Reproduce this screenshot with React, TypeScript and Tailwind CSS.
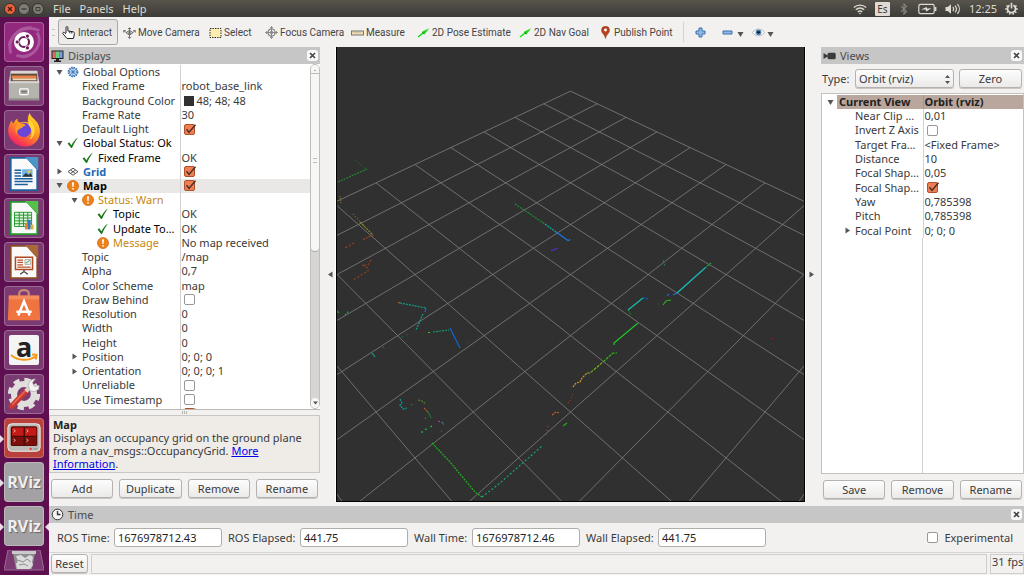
import type { ReactNode } from "react";

const FONT = "font-['Noto_Sans','Open_Sans',sans-serif]";

type IconName = "cog" | "ok" | "warn" | "grid";

type Prop = {
  name: string;
  level: number;
  arrow?: "open" | "closed";
  icon?: IconName;
  value?: string;
  checked?: boolean;
  swatch?: boolean;
  tone?: string;
  selected?: boolean;
};

const DISPLAYS: Prop[] = [
  { name: "Global Options", level: 0, arrow: "open", icon: "cog" },
  { name: "Fixed Frame", level: 1, value: "robot_base_link" },
  { name: "Background Color", level: 1, value: "48; 48; 48", swatch: true },
  { name: "Frame Rate", level: 1, value: "30" },
  { name: "Default Light", level: 1, checked: true },
  { name: "Global Status: Ok", level: 0, arrow: "open", icon: "ok", tone: "text-black" },
  { name: "Fixed Frame", level: 1, icon: "ok", value: "OK", tone: "text-black" },
  { name: "Grid", level: 0, arrow: "closed", icon: "grid", checked: true, tone: "font-bold text-[#1c6ab8]" },
  { name: "Map", level: 0, arrow: "open", icon: "warn", checked: true, tone: "font-bold text-black", selected: true },
  { name: "Status: Warn", level: 1, arrow: "open", icon: "warn", tone: "text-[#c8860e]" },
  { name: "Topic", level: 2, icon: "ok", value: "OK", tone: "text-black" },
  { name: "Update To…", level: 2, icon: "ok", value: "OK", tone: "text-black" },
  { name: "Message", level: 2, icon: "warn", value: "No map received", tone: "text-[#c8860e]" },
  { name: "Topic", level: 1, value: "/map" },
  { name: "Alpha", level: 1, value: "0,7" },
  { name: "Color Scheme", level: 1, value: "map" },
  { name: "Draw Behind", level: 1, checked: false },
  { name: "Resolution", level: 1, value: "0" },
  { name: "Width", level: 1, value: "0" },
  { name: "Height", level: 1, value: "0" },
  { name: "Position", level: 1, arrow: "closed", value: "0; 0; 0" },
  { name: "Orientation", level: 1, arrow: "closed", value: "0; 0; 0; 1" },
  { name: "Unreliable", level: 1, checked: false },
  { name: "Use Timestamp", level: 1, checked: false },
  { name: "", level: 1, checked: true },
];

const VIEW: Prop[] = [
  { name: "Near Clip …", level: 1, value: "0,01" },
  { name: "Invert Z Axis", level: 1, checked: false },
  { name: "Target Fra…", level: 1, value: "<Fixed Frame>" },
  { name: "Distance", level: 1, value: "10" },
  { name: "Focal Shap…", level: 1, value: "0,05" },
  { name: "Focal Shap…", level: 1, checked: true },
  { name: "Yaw", level: 1, value: "0,785398" },
  { name: "Pitch", level: 1, value: "0,785398" },
  { name: "Focal Point", level: 1, arrow: "closed", value: "0; 0; 0" },
];

function Arrow({ dir }: { dir: "open" | "closed" | "left" }) {
  const d = { open: "M0.5 1h6L3.5 6z", closed: "M1.5 0.5v6L6 3.5z", left: "M5.5 0.5v6L1 3.5z" }[dir];
  return (
    <svg width="7" height="7" viewBox="0 0 7 7" fill="#555" className="shrink-0" aria-hidden>
      <path d={d} />
    </svg>
  );
}

function RowIcon({ name }: { name: IconName }) {
  if (name === "ok")
    return (
      <svg width="12" height="12" viewBox="0 0 12 12" fill="#1a7a1a" aria-hidden>
        <path d="M0.6 6.4 2.200 5.2 4.4 8.3C6 5 8 2.200 11 0.400 8.6 3.6 6.600 7 5 11H4.1z" />
      </svg>
    );
  if (name === "warn")
    return (
      <svg width="12" height="12" viewBox="0 0 12 12" aria-hidden>
        <circle cx="6" cy="6" r="5.5" fill="#f08019" stroke="#c9610c" strokeWidth="0.7" />
        <path d="M5 2.2h2L6.6 7H5.4z" fill="#fff" />
        <circle cx="6" cy="8.8" r="0.9" fill="#fff" />
      </svg>
    );
  if (name === "grid")
    return (
      <svg width="12" height="12" viewBox="0 0 12 12" fill="none" stroke="#444" strokeWidth="0.9" aria-hidden>
        <path d="M6 2.2 11 5.7 6 9.2 1 5.7zM3.5 4 8.5 7.5M8.5 4 3.5 7.5" />
      </svg>
    );
  return (
    <svg width="12" height="12" viewBox="0 0 12 12" fill="none" stroke="#3a76b8" aria-hidden>
      <circle cx="6" cy="6" r="4.6" strokeWidth="1.6" strokeDasharray="1.6 0.8" />
      <circle cx="6" cy="6" r="3.6" strokeWidth="0.8" />
      <circle cx="6" cy="6" r="1.2" strokeWidth="0.8" />
      <path d="M6 2.4v7.2M2.4 6h7.2M3.5 3.5l5 5M8.5 3.5l-5 5" strokeWidth="0.7" />
    </svg>
  );
}

function Check({ on, label, id }: { on?: boolean; label?: string; id?: string }) {
  return (
    <span className="relative block h-[11px] w-[11px] shrink-0">
      <input
        id={id}
        type="checkbox"
        defaultChecked={on}
        aria-label={label}
        className="peer block h-[11px] w-[11px] appearance-none rounded-[2px] border border-[#9a9895] bg-white checked:border-[#b0512c] checked:bg-[#ee7f55]"
      />
      <svg viewBox="0 0 13 12" width="13" height="12" fill="none" stroke="#4a3028" strokeWidth="1.5" className="pointer-events-none absolute top-0 left-0 hidden peer-checked:block" aria-hidden>
        <path d="M2.5 5.2 5 8.4 11.5 0.8" />
      </svg>
    </span>
  );
}

function PropRow({ p }: { p: Prop }) {
  return (
    <tr className={p.selected ? "bg-[#e9e8e7]" : ""}>
      <td className="overflow-hidden border-r border-[#d4d2d0] p-0">
        <div className="flex h-[14px] items-center pl-[2px] whitespace-nowrap">
          {p.level > 0 && <span className="w-[15px] shrink-0" />}
          {p.level > 1 && <span className="w-[15px] shrink-0" />}
          <span className="flex w-4 shrink-0 justify-center">{p.arrow && <Arrow dir={p.arrow} />}</span>
          {p.icon && <span className="w-4 shrink-0"><RowIcon name={p.icon} /></span>}
          <span className={p.tone}>{p.name}</span>
        </div>
      </td>
      <td className="p-0">
        <div className="flex h-[14px] items-center pl-px whitespace-nowrap">
          {p.checked !== undefined && <span className="pl-[2px]"><Check on={p.checked} label={p.name || "Enabled"} /></span>}
          {p.swatch && <span className="mr-[3px] ml-[2px] h-[10px] w-[10px] bg-[#303030]" />}
          {p.value}
        </div>
      </td>
    </tr>
  );
}

function PushButton({ children, className = "" }: { children: ReactNode; className?: string }) {
  return (
    <button type="button" className={`h-[19px] rounded-[3px] border border-[#b4b1ae] bg-linear-to-b from-[#fdfdfd] to-[#ebeae9] text-center leading-4 whitespace-nowrap shadow-[0_1px_0_#c9c7c5] ${className}`}>
      {children}
    </button>
  );
}

function CloseButton() {
  return (
    <button type="button" aria-label="Close" className="mr-[2px] ml-auto flex h-[11px] w-[11px] items-center justify-center rounded-[3px] bg-[#f8f8f8]">
      <svg width="7" height="7" viewBox="0 0 7 7" stroke="#444" strokeWidth="1.6" aria-hidden><path d="M1 1l5 5M6 1 1 6" /></svg>
    </button>
  );
}

function DockHeader({ icon, title }: { icon: ReactNode; title: string }) {
  return (
    <header className="flex h-[17px] shrink-0 items-center gap-1 bg-[#c6c6c6] pl-[2px] text-[#4a4a4a]">
      {icon}
      <h2>{title}</h2>
      <CloseButton />
    </header>
  );
}

/* ---------- top bar ---------- */

function TopBar() {
  return (
    <header className="flex h-[17px] shrink-0 items-center bg-linear-to-b from-[#57544c] to-[#3c3b37] text-[#dfdbd2]">
      <div className="flex w-[49px] items-center gap-[2px] pl-1">
        <button type="button" aria-label="Close window" className="h-3 w-3">
          <svg viewBox="0 0 12 12" aria-hidden><circle cx="6" cy="6" r="5.5" fill="#e9623a" stroke="#33312c" /><path d="M4 4l4 4M8 4 4 8" stroke="#4a1c0e" strokeWidth="1.3" /></svg>
        </button>
        <button type="button" aria-label="Minimize window" className="h-3 w-3">
          <svg viewBox="0 0 12 12" aria-hidden><circle cx="6" cy="6" r="5.5" fill="#7f7c74" stroke="#33312c" /><path d="M3.5 6h5" stroke="#3a3833" strokeWidth="1.3" /></svg>
        </button>
        <button type="button" aria-label="Maximize window" className="h-3 w-3">
          <svg viewBox="0 0 12 12" fill="none" aria-hidden><circle cx="6" cy="6" r="5.5" fill="#7f7c74" stroke="#33312c" /><path d="M4 4.5h4v3.2H4z" stroke="#3a3833" /></svg>
        </button>
      </div>
      <nav className="flex gap-[9px] pl-1">
        <button type="button">File</button>
        <button type="button">Panels</button>
        <button type="button">Help</button>
      </nav>
      <div className="ml-auto flex items-center gap-2 pr-[6px]">
        <svg width="14" height="12" viewBox="0 0 14 12" fill="none" stroke="#dfdbd2" strokeWidth="1.3" aria-label="Wi-Fi">
          <path d="M0.8 4.6c3.6-3.2 8.8-3.2 12.4 0M2.8 6.8c2.5-2.2 5.9-2.2 8.4 0M4.8 8.9c1.4-1.2 3-1.2 4.4 0" />
          <path d="M5.8 10 7 11.4 8.2 10z" fill="#dfdbd2" stroke="none" />
        </svg>
        <span className="flex h-[14px] w-[15px] items-center justify-center rounded-[1px] bg-[#dfdbd2] text-[10px] text-[#3c3b37]">Es</span>
        <svg width="8" height="12" viewBox="0 0 8 12" fill="none" stroke="#8a877f" strokeWidth="1.1" className="mx-[2px]" aria-label="Bluetooth"><path d="M1 3.2 6.5 8.4 4 11V1l2.5 2.6L1 8.8" /></svg>
        <svg width="19" height="12" viewBox="0 0 19 12" fill="none" stroke="#dfdbd2" strokeWidth="1.2" aria-label="Battery">
          <rect x="0.8" y="1.4" width="15.4" height="9.2" rx="1.5" />
          <path d="M17.6 4v4" strokeWidth="1.6" />
          <path d="M3 6.5 8.5 4l.6 1.6 4.4-.4L8.2 8.4l-.6-1.8z" fill="#dfdbd2" stroke="none" />
        </svg>
        <svg width="16" height="12" viewBox="0 0 16 12" fill="none" stroke="#dfdbd2" strokeWidth="1.2" aria-label="Volume">
          <path d="M0.5 4h2.2L6 1.2v9.6L2.7 8H.5z" fill="#dfdbd2" stroke="none" />
          <path d="M7.8 4c1 1.2 1 2.8 0 4M10 2.6c1.8 2 1.8 4.8 0 6.8M12.4 1.2c2.6 2.8 2.6 6.8 0 9.6" />
        </svg>
        <time>12:25</time>
        <svg width="13" height="13" viewBox="0 0 13 13" fill="none" stroke="#dfdbd2" aria-label="Session">
          <path d="M4.6 3.2a4 4 0 1 0 3.8 0" strokeWidth="1.8" />
          <path d="M6.5 0.8v5.7" strokeWidth="1.6" />
          <path d="M1.4 3.600l1.600 0.900M0.200 7h1.800M1.600 10.600l1.500-1.100M4.400 12.600l0.700-1.600M8.600 12.600l-0.700-1.600M11.400 10.600l-1.500-1.100M12.800 7H11M11.600 3.600 10 4.500" strokeWidth="1.5" />
        </svg>
      </div>
    </header>
  );
}

/* ---------- launcher ---------- */

function OfficeDoc({ color, fold, children }: { color: string; fold: string; children: ReactNode }) {
  return (
    <svg viewBox="0 0 40 40" aria-hidden>
      <path d="M5 2h20l10 11v25H5z" fill={color} />
      <path d="M7 4h16l10 11v21H7z" fill="#fafafa" />
      <path d="M21 2h14v14z" fill={fold} />
      {children}
    </svg>
  );
}

function UbuntuLogo() {
  return (
    <svg viewBox="0 0 40 40" fill="none" aria-hidden>
      <path d="M4 24C8 8 24 2 36 8M6 32C2 16 14 4 28 5M34 10c6 12-2 24-16 26M12 34c10 4 22-2 24-14" stroke="#fff" strokeOpacity="0.22" strokeWidth="3" />
      <circle cx="20" cy="20" r="10.5" fill="#fff" />
      <circle cx="20" cy="20" r="5.3" stroke="#6b1a5c" strokeWidth="2.2" />
      <g fill="#6b1a5c" stroke="#fff" strokeWidth="0.9">
        <circle cx="12.8" cy="20" r="2.2" />
        <circle cx="23.6" cy="13.8" r="2.2" />
        <circle cx="23.6" cy="26.2" r="2.2" />
      </g>
    </svg>
  );
}

function Files() {
  return (
    <svg viewBox="0 0 40 40" aria-hidden>
      <path d="M6 4h28l2 12H4z" fill="#d9d7d2" />
      <path d="M6 7h28v9H6z" fill="#5c4a3c" />
      <path d="M7 9h26v3H7z" fill="#e8834a" />
      <path d="M8 12h25v2H8z" fill="#f6d9b8" />
      <path d="M4 15h32v20H4z" fill="#b5b3ae" />
      <path d="M4 15h32v2H4z" fill="#d7d5d1" />
      <path d="M4 33h32v2H4z" fill="#8f8d88" />
      <rect x="15.5" y="23" width="9" height="6" rx="1" fill="#a5a39e" stroke="#fff" strokeWidth="1.3" />
      <path d="M17.5 26h5" stroke="#666" />
    </svg>
  );
}

function Firefox() {
  return (
    <svg viewBox="0 0 40 40" aria-hidden>
      <defs>
        <linearGradient id="fx" x1="0.8" y1="0" x2="0.2" y2="1">
          <stop offset="0" stopColor="#ffe226" />
          <stop offset="0.45" stopColor="#ff9420" />
          <stop offset="0.8" stopColor="#fb3f4c" />
          <stop offset="1" stopColor="#e31587" />
        </linearGradient>
      </defs>
      <path d="M26 2c1 4 5 6 8 10 5 8 3 18-4 23-7 4-17 3-22-3C2 26 2 17 7 10c1 2 1 3 2 3 1-2 2-4 4-5 0 3 1 4 3 4 3-1 6-1 8 0 0-4 0-7 2-10z" fill="url(#fx)" />
      <circle cx="20" cy="20" r="7.6" fill="#6a46d8" />
      <path d="M13 13c3 0 7 0 9 2-3 1-4 3-7 4-2 1-3 3-2 6-3-3-3-8 0-12z" fill="#ff9a28" />
      <path d="M25 9c6 4 8 11 5 17-1 2-2 3-4 4 3-5 3-11-1-15z" fill="#ffd43a" />
    </svg>
  );
}

function Terminator() {
  return (
    <svg viewBox="0 0 40 40" aria-hidden>
      <rect x="3" y="5" width="34" height="29" rx="4" fill="#bdbbb6" stroke="#eee" />
      <rect x="6" y="7.5" width="28" height="21" rx="2" fill="#4a0c0a" />
      <path d="M7.5 9h12v8.5h-12zM21 9h12v8.5H21z" fill="#c51a16" />
      <path d="M7.5 19h12v8.5h-12zM21 19h12v8.5H21z" fill="#7c0e0c" />
      <path d="M9 11l2 1.5L9 14M22.5 11l2 1.5-2 1.5M9 21l2 1.5L9 24M22.5 21l2 1.5-2 1.5" stroke="#f0a8a0" fill="none" />
      <circle cx="27" cy="31.5" r="1.2" fill="#e33" />
      <path d="M30 31.5h4" stroke="#888" />
    </svg>
  );
}

function SettingsGear() {
  return (
    <svg viewBox="0 0 40 40" aria-hidden>
      <circle cx="20" cy="20" r="14.5" fill="none" stroke="#e0dfdd" strokeWidth="5" strokeDasharray="6.4 4.98" />
      <circle cx="20" cy="20" r="10.5" fill="none" stroke="#e0dfdd" strokeWidth="6.5" />
      <path d="M7 33 22 17" stroke="#c8382c" strokeWidth="6" strokeLinecap="round" />
      <path d="M8 31 21 17" stroke="#e8695a" strokeWidth="1.6" strokeLinecap="round" />
      <path d="M22 17l6-6" stroke="#d8d7d5" strokeWidth="4.5" />
      <path d="M25 13c-1-5 2-9 7-9l-3 4 2 4 5-1c0 6-6 8-10 5z" fill="#f4f3f1" stroke="#999" strokeWidth="0.6" />
    </svg>
  );
}

const RVizTile = () => (
  <span className="flex h-full items-center justify-center font-['Open_Sans',sans-serif] text-[16px] font-bold text-[#f0eff0] [text-shadow:1px_1px_1px_#666]">RViz</span>
);

type App = { name: string; tile: string; art: ReactNode; running?: boolean; focused?: boolean };

const DARK_TILE = "bg-[#7b3a72]";

const APPS: App[] = [
  { name: "Dash", tile: "bg-[#93297f]", art: <UbuntuLogo /> },
  { name: "Files", tile: DARK_TILE, art: <Files /> },
  { name: "Firefox", tile: DARK_TILE, art: <Firefox /> },
  {
    name: "Writer",
    tile: DARK_TILE,
    art: (
      <OfficeDoc color="#1b5f9c" fold="#4c94c8">
        <path d="M10 16h7M10 19h7M10 22h7M10 25h19M10 28h19M10 31h14" stroke="#1b5f9c" strokeWidth="1.6" />
        <path d="M18 15h11v8H18z" fill="#6fb7e8" />
        <path d="M18 23l4-4 3 2 2-2 2 4z" fill="#333" />
        <circle cx="25.5" cy="17.5" r="1.5" fill="#f8c830" />
      </OfficeDoc>
    ),
  },
  {
    name: "Calc",
    tile: DARK_TILE,
    art: (
      <OfficeDoc color="#21962c" fold="#55c04a">
        <path d="M10 14h18v15H10z" fill="#dff5dc" />
        <path d="M10 14h18v15H10zM10 17h18M10 20h18M10 23h18M10 26h18M15 14v15M19.5 14v15M24 14v15" stroke="#21962c" fill="none" />
        <path d="M21 25h3v7h-3z" fill="#f08030" />
        <path d="M24 22h3v10h-3z" fill="#2f78c0" />
        <path d="M27 27h3v5h-3z" fill="#e0b030" />
      </OfficeDoc>
    ),
  },
  {
    name: "Impress",
    tile: DARK_TILE,
    art: (
      <OfficeDoc color="#8a4a22" fold="#a86a34">
        <path d="M11 15h18v13H11z" fill="#fff" stroke="#b04a22" strokeWidth="1.6" />
        <path d="M13 18h6M13 20.5h6M13 23h6M13 25.5h14" stroke="#c0502a" strokeWidth="1.3" />
        <path d="M21 17.5h6v5h-6z" fill="#f2f2e8" stroke="#888" strokeWidth="0.7" />
        <path d="M22 21l2-1 2-2" stroke="#3a9a3a" fill="none" />
        <path d="M20 28v3M16 33l4-3 4 3" stroke="#444" fill="none" strokeWidth="1.3" />
      </OfficeDoc>
    ),
  },
  {
    name: "Software",
    tile: DARK_TILE,
    art: (
      <svg viewBox="0 0 40 40" fill="none" aria-hidden>
        <path d="M15 12V7c0-5 10-5 10 0v5" stroke="#c88a78" strokeWidth="2.4" />
        <path d="M4 9h32l1 26H3z" fill="#ef7440" />
        <path d="M4 9h32v4H4z" fill="#f58c5c" />
        <path d="M14 30l6-15 6 15M12 26h16" stroke="#fff" strokeWidth="2.6" />
      </svg>
    ),
  },
  {
    name: "Amazon",
    tile: DARK_TILE,
    art: (
      <span className="relative m-1 flex h-[30px] items-center justify-center rounded-[2px] bg-[#f4f4f4] pb-2 text-[27px] leading-none font-bold text-[#222]">
        a
        <svg viewBox="0 0 30 10" width="30" height="10" fill="none" stroke="#f39a1e" strokeWidth="2" className="absolute bottom-[2px] left-0" aria-hidden>
          <path d="M2 2c7 6 18 6.5 25 1M23 1.5l4.5 0.5-0.8 4.5" />
        </svg>
      </span>
    ),
  },
  { name: "System Settings", tile: DARK_TILE, art: <SettingsGear /> },
  { name: "Terminator", tile: "bg-[#b8413c]", art: <Terminator />, running: true },
  { name: "RViz", tile: "bg-[#a4a1a5]", art: <RVizTile />, running: true },
  { name: "RViz", tile: "bg-[#a4a1a5]", art: <RVizTile />, running: true, focused: true },
];

function Launcher() {
  return (
    <aside className="flex w-[49px] shrink-0 flex-col gap-1 overflow-hidden bg-[#5d0f50] pt-[5px] pl-1">
      {APPS.map((a, i) => (
        <button key={i} type="button" aria-label={a.name} className={`relative h-10 w-10 shrink-0 rounded-[4px] border border-white/25 ${a.tile}`}>
          {a.art}
          {a.running && <span className="absolute top-4 -left-[5px] border-y-4 border-l-4 border-y-transparent border-l-[#e6dde5]" />}
          {a.focused && <span className="absolute top-4 -right-[6px] border-y-4 border-r-4 border-y-transparent border-r-[#e6dde5]" />}
        </button>
      ))}
      <button type="button" aria-label="Trash" className="h-[22px] w-10 shrink-0">
        <svg viewBox="0 0 40 22" aria-hidden>
          <path d="M4 0h32l4 20H0z" fill="#7b3a72" stroke="#9a6a94" />
          <path d="M9 3h22l-3 16H12z" fill="#8f8e90" />
          <path d="M8 1h24v3H8z" fill="#c9c8ca" />
          <path d="M12 6l5-1 4 3 5-3 3 2-1 5 1 3-3 4H13l-1-5 2-3z" fill="#dcdbdc" />
          <path d="M14 10l5 2 4-3 4 3M15 15l5-1 4 2" stroke="#8f8e90" fill="none" />
        </svg>
      </button>
    </aside>
  );
}

/* ---------- toolbar ---------- */

const CameraMove = (
  <svg width="13" height="12" viewBox="0 0 13 12" fill="none" stroke="#666" strokeWidth="0.9" aria-hidden>
    <path d="M6.5 3.2 10 5.7 6.5 8.2 3 5.7zM6.5 0.6v10.8M4.9 9.8l1.6 1.6 1.6-1.6M0.7 3.5l2.5 2M0.7 3.5v2M0.7 3.5h2M12.3 3.5l-2.5 2M12.3 3.5v2M12.3 3.5h-2M5 1.5h3" />
    <circle cx="6.5" cy="5.7" r="1.3" />
  </svg>
);
const SelectBox = (
  <svg width="13" height="12" viewBox="0 0 13 12" aria-hidden>
    <rect x="1" y="1.5" width="11" height="9" fill="#fbeeb0" stroke="#222" strokeDasharray="1.4 1.1" />
  </svg>
);
const Focus = (
  <svg width="13" height="13" viewBox="0 0 13 13" fill="none" stroke="#888" aria-hidden>
    <circle cx="6.5" cy="6.5" r="3.6" strokeWidth="1.3" />
    <circle cx="6.5" cy="6.5" r="1.4" strokeWidth="0.9" />
    <path d="M6.5 0.5v12M0.5 6.5h12" />
    <path d="M5 2l1.5-1.5L8 2M5 11l1.5 1.5L8 11M2 5 0.5 6.5 2 8M11 5l1.5 1.5L11 8" strokeWidth="0.8" />
  </svg>
);
const Ruler = (
  <svg width="13" height="6" viewBox="0 0 13 6" aria-hidden>
    <rect x="0.5" y="1" width="12" height="4" fill="#efdcae" stroke="#777" />
    <path d="M3 1.5v1.5M5 1.5v1.5M7 1.5v1.5M9 1.5v1.5" stroke="#999" strokeWidth="0.6" />
  </svg>
);
const PoseArrow = (
  <svg width="13" height="12" viewBox="0 0 13 12" aria-hidden>
    <path d="M1 10 6 6" stroke="#16e016" strokeWidth="1.6" />
    <path d="M12.3 1.2 5 4.8l2.4 2.400z" fill="#12d812" />
    <path d="M5.400 5.200l2 2" stroke="#0b7a0b" />
  </svg>
);
const Pin = (
  <svg width="9" height="13" viewBox="0 0 9 13" aria-hidden>
    <path d="M4.5 12.5C4 8.5 0.5 7.5 0.5 4.3a4 4 0 0 1 8 0C8.5 7.5 5 8.5 4.5 12.5z" fill="#b8431e" stroke="#8a3014" strokeWidth="0.5" />
    <circle cx="4.5" cy="4" r="1.4" fill="#fff" />
  </svg>
);

const TOOLS = [
  { label: "Move Camera", icon: CameraMove, width: "w-[86px]" },
  { label: "Select", icon: SelectBox, width: "w-[56px]" },
  { label: "Focus Camera", icon: Focus, width: "w-[86px]" },
  { label: "Measure", icon: Ruler, width: "w-[66px]" },
  { label: "2D Pose Estimate", icon: PoseArrow, width: "w-[102px]" },
  { label: "2D Nav Goal", icon: PoseArrow, width: "w-[80px]" },
  { label: "Publish Point", icon: Pin, width: "w-[84px]" },
];

function Toolbar() {
  return (
    <div role="toolbar" className="flex h-[30px] shrink-0 items-center pl-[3px] font-['Roboto',sans-serif] text-[10px] text-[#444]">
      <span className="mr-[3px] h-[7px] w-[3px] border-y border-[#c4c2c0]" />
      <button type="button" className="mr-[5px] flex h-[26px] w-[60px] items-center gap-[3px] rounded-[3px] border border-[#a8a6a3] bg-linear-to-b from-[#e2e1e0] to-[#eeedec] pt-px pl-[3px]">
        <svg width="13" height="13" viewBox="0 0 13 13" fill="#fff" stroke="#222" strokeWidth="1" aria-hidden>
          <path d="M4 7V1.6c0-1.4 1.9-1.4 1.9 0V5l5 0.7c1 0.2 1.6 0.8 1.5 1.8L12 10l-0.6 2.5H5L1 7.8c-0.8-1 0.5-2 1.5-1.2L4 8M7.8 5.3v2M9.8 5.6v2" />
        </svg>
        Interact
      </button>
      {TOOLS.map((t) => (
        <button key={t.label} type="button" className={`flex shrink-0 items-center gap-[2px] pt-px whitespace-nowrap ${t.width}`}>
          <span className="flex w-[13px] shrink-0 justify-center">{t.icon}</span>
          {t.label}
        </button>
      ))}
      <span className="h-5 w-px bg-[#d6d4d2]" />
      <button type="button" aria-label="Add tool" className="ml-[11px]">
        <svg width="11" height="11" viewBox="0 0 11 11" aria-hidden><path d="M4 1h3v3h3v3H7v3H4V7H1V4h3z" fill="#8fb8e4" stroke="#3a70b0" /></svg>
      </button>
      <button type="button" aria-label="Remove tool" className="ml-4 flex items-center gap-1">
        <svg width="11" height="5" viewBox="0 0 11 5" aria-hidden><path d="M1 1h9v3H1z" fill="#8fb8e4" stroke="#3a70b0" /></svg>
        <span className="pt-1"><Arrow dir="open" /></span>
      </button>
      <button type="button" aria-label="Tool visibility" className="ml-2 flex items-center gap-[2px]">
        <svg width="13" height="9" viewBox="0 0 13 9" aria-hidden>
          <path d="M0.5 4.5C3.5 0 9.5 0 12.5 4.5 9.5 9 3.5 9 0.5 4.5z" fill="#fff" stroke="#aaa" strokeWidth="0.8" />
          <circle cx="6.5" cy="4.3" r="2.9" fill="#4d84b8" />
          <circle cx="6.5" cy="4.3" r="1.3" fill="#111" />
        </svg>
        <span className="pt-1"><Arrow dir="open" /></span>
      </button>
    </div>
  );
}

/* ---------- docks ---------- */

function DisplaysDock() {
  return (
    <section className="flex w-[271px] shrink-0 flex-col">
      <DockHeader
        title="Displays"
        icon={
          <svg width="13" height="12" viewBox="0 0 13 12" aria-hidden>
            <rect x="0.5" y="0.5" width="12" height="8.5" fill="#222" />
            <path d="M1.5 1.5h3.3v6.5H1.5z" fill="#e06a6a" />
            <path d="M4.8 1.5h3.4v6.5H4.8z" fill="#6ad07a" />
            <path d="M8.2 1.5h3.3v6.5H8.2z" fill="#7a9ae0" />
            <path d="M5 9h3v1.5h2V12H3v-1.5h2z" fill="#222" />
          </svg>
        }
      />
      <div className="flex min-h-0 flex-1 border-b border-[#bbb9b6] bg-white">
        <div className="flex-1 overflow-hidden pt-px">
          <table className="h-[356px] w-full table-fixed border-collapse">
            <colgroup><col className="w-[131px]" /><col /></colgroup>
            <tbody>{DISPLAYS.map((p, i) => <PropRow key={i} p={p} />)}</tbody>
          </table>
        </div>
        <div className="flex w-[10px] flex-col justify-between rounded-[5px] border border-[#c0bebb] bg-[#d6d5d3]">
          <div className="flex h-[187px] flex-col items-center rounded-[5px] border-b border-[#a8a6a3] bg-[#f7f7f6]">
            <span className="h-[9px] w-full rounded-t-[5px] border-b border-[#bbb] text-center text-[8px] leading-[9px] text-[#888]">-</span>
            <span className="mt-[84px] h-[5px] w-1 border-y border-[#bbb]" />
          </div>
          <span className="flex h-[10px] items-center justify-center rounded-[5px] bg-[#f7f7f6]">
            <svg width="5" height="4" viewBox="0 0 5 4" fill="#555" aria-hidden><path d="M0 0.5h5L2.5 3.5z" /></svg>
          </span>
        </div>
      </div>
      <div className="flex h-[5px] items-center justify-center gap-px">
        <i className="h-[3px] w-px bg-[#b5b3b0]" /><i className="h-[3px] w-px bg-[#b5b3b0]" /><i className="h-[3px] w-px bg-[#b5b3b0]" />
      </div>
      <div className="h-[58px] shrink-0 border border-[#c9c6c3] bg-[#efebe7] px-[3px] pt-[2px] leading-[13px]">
        <h3 className="font-bold text-[#222]">Map</h3>
        <p>
          Displays an occupancy grid on the ground plane<br />
          from a nav_msgs::OccupancyGrid. <a href="#map" className="text-[#0000ee] underline">More<br />Information</a>.
        </p>
      </div>
      <div className="flex shrink-0 gap-[6px] px-[2px] pt-[6px] pb-[4px]">
        {["Add", "Duplicate", "Remove", "Rename"].map((b) => <PushButton key={b} className="flex-1 basis-0">{b}</PushButton>)}
      </div>
    </section>
  );
}

function ViewsDock() {
  return (
    <section className="flex w-[203px] shrink-0 flex-col">
      <DockHeader
        title="Views"
        icon={<svg width="13" height="8" viewBox="0 0 13 8" fill="#3c3c3c" aria-hidden><path d="M0.5 1l4 2.5V1.5h0.5L6 0.7h6L12.7 2v4L12 7.3H6L4.5 6.5v-2L0.5 7z" /></svg>}
      />
      <div className="flex items-center gap-[5px] py-[5px] pr-[2px] pl-px">
        <label htmlFor="view-type" className="w-7">Type:</label>
        <span className="relative">
          <select id="view-type" className="h-[19px] w-[99px] appearance-none rounded-[3px] border border-[#b4b1ae] bg-linear-to-b from-[#fdfdfd] to-[#ebeae9] pl-[3px] leading-4 shadow-[0_1px_0_#c9c7c5]">
            <option>Orbit (rviz)</option>
          </select>
          <svg width="5" height="9" viewBox="0 0 5 9" fill="#555" className="pointer-events-none absolute top-[6px] right-[4px]" aria-hidden><path d="M0 3 2.5 0 5 3zM0 6h5L2.5 9z" /></svg>
        </span>
        <PushButton className="flex-1">Zero</PushButton>
      </div>
      <div className="flex min-h-0 flex-1 border border-[#c4c2c0] bg-white">
        <div className="flex flex-1 flex-col">
          <table className="mt-px h-[143px] w-full table-fixed border-collapse">
            <colgroup><col className="w-[101px]" /><col /></colgroup>
            <thead>
              <tr className="text-left">
                <th className="border-r border-[#a8968c] p-0">
                  <div className="flex h-[14px] items-center">
                    <span className="flex w-[15px] justify-center pl-[2px]"><Arrow dir="open" /></span>
                    <span className="flex h-[14px] flex-1 items-center bg-[#b9a79d] pl-[2px] text-[#222]">Current View</span>
                  </div>
                </th>
                <th className="p-0 text-[#222]"><div className="flex h-[14px] items-center bg-[#b9a79d] pl-px">Orbit (rviz)</div></th>
              </tr>
            </thead>
            <tbody>{VIEW.map((p, i) => <PropRow key={i} p={p} />)}</tbody>
          </table>
          <span className="w-[101px] flex-1 border-r border-[#d4d2d0]" />
        </div>
      </div>
      <div className="flex shrink-0 gap-[6px] px-[2px] pt-[6px] pb-[3px]">
        {["Save", "Remove", "Rename"].map((b) => <PushButton key={b} className="flex-1 basis-0">{b}</PushButton>)}
      </div>
    </section>
  );
}

/* ---------- 3D view ---------- */

// Orbit camera: 10 m away, yaw and pitch of 45 degrees, aimed at the origin.
const CX = 570.5;
const CY = 274.5;
const FOCAL = 550;

function project(i: number, j: number) {
  const depth = 20 + i + j;
  return { x: CX + (FOCAL * Math.SQRT2 * (i - j)) / depth, y: CY - (FOCAL * (i + j)) / depth };
}

const GRID = Array.from({ length: 11 }, (_, k) => k - 5).flatMap((k) => [
  [project(k, -5), project(k, 5)],
  [project(-5, k), project(5, k)],
]);

// [colour, points, dash pattern]
const SCAN: [string, string, string?][] = [
  ["#1f8a2a", "338,182 367,169", "2 1"],
  ["#1f6a2a", "355,160 360,164 366,169", "1 3"],
  ["#8a6a22", "340,196 341,203", "1 1"],
  ["#a0622a", "353,214 364,226", "1 2"],
  ["#8a8a22", "360,222 373,235", "2 1"],
  ["#a04a1e", "373,235 362,240", "2 1"],
  ["#a0401e", "354,243 345,248", "2 2"],
  ["#94401e", "371,260 368,265 362,265 368,268 368,271 353,280", "2 2"],
  ["#1fa02a", "336,310 339,313"],
  ["#1f9a4a", "345,315 349,311", "2 1"],
  ["#c0702a", "398,302.5 400,303"],
  ["#12a08a", "400,303 426,308", "2 1"],
  ["#1a6ad0", "426,308 425,312"],
  ["#12a08a", "423,314 420,321 416,330", "2 1"],
  ["#4ac01e", "428,332.5 430,332.5"],
  ["#12a06a", "433,332 449,330", "2 1"],
  ["#1464c8", "450,328 455,338 460,348"],
  ["#1f6a2a", "467,343 469,342", "1 1"],
  ["#127a5a", "402,337 411,333", "1 4"],
  ["#12a08a", "372,353 375,357"],
  ["#1f8a2a", "383,347 385,348", "1 1"],
  ["#1e8a3a", "515,204 545,224", "2 1"],
  ["#12b0a0", "545,224 556,232", "2 1"],
  ["#1478e0", "556,232 568,240.5 570.5,239.5"],
  ["#5a2ad8", "551,251 558,248"],
  ["#12a0a0", "400,399 402,403 400,405 403,409 407,408", "2 1"],
  ["#a0502a", "411,405 413,404", "1 1"],
  ["#5a8a2a", "418,400 422,401 426,404", "2 1"],
  ["#b0602a", "424,408 426,410 428,412", "2 1"],
  ["#2aa03a", "428,412 431,418", "1 1"],
  ["#1fd02a", "425,418 427,418", "1 1"],
  ["#c03aa0", "438,421 443,423", "2 2"],
  ["#12a0a0", "442,422 444,425", "1 1"],
  ["#1fc04a", "422,433 422,430 427,429 434,425", "2 4"],
  ["#a0502a", "441,431 442,431"],
  ["#20b020", "432,443 450,462 475,492 482,497", "2 1"],
  ["#12a878", "482,497 500,483 542,446", "2 2"],
  ["#c0602a", "552,415 556,412 560,413", "2 1"],
  ["#a0502a", "548,426 547,431 545,437", "1 3"],
  ["#20b020", "563,426 567,423"],
  ["#a0401e", "568,403 570,401 573,394", "1 2"],
  ["#d0a018", "573,387 576,383 580,382 582,378 587,373", "2 1"],
  ["#7ab01e", "587,373 590,373 603,362", "3 1"],
  ["#3ab81e", "603,362 613,353 617,353", "3 1"],
  ["#1fc82a", "614,345 614,343 638,323"],
  ["#1f6a2a", "631,315 628,310"],
  ["#12c0b0", "628,310 643,298"],
  ["#1464c8", "643,298 649,299", "2 1"],
  ["#1f7a4a", "663,260 665,266", "2 2"],
  ["#12c0c0", "677,293 705,268"],
  ["#1478e0", "673,295 677,293"],
  ["#20b04a", "705,268 711,263", "2 1"],
  ["#1464c8", "667,296 669,294"],
  ["#2ab01e", "663,305 666,301 671,300"],
  ["#1f6a2a", "658,304 660,304", "1 1"],
  ["#d01010", "772,338.5 773,338.5"],
];

function Viewport() {
  return (
    <div className="min-w-0 flex-1 border-x border-b border-black bg-[#303030]">
      <svg viewBox="337 47 467 454" preserveAspectRatio="xMidYMid slice" className="h-full w-full" fill="none" role="img" aria-label="3D view">
        <g stroke="#808080" strokeWidth="0.8">
          {GRID.map(([a, b], i) => <line key={i} x1={a.x} y1={a.y} x2={b.x} y2={b.y} />)}
        </g>
        {SCAN.map(([color, points, dash], i) => (
          <polyline key={i} points={points} stroke={color} strokeWidth="1.2" strokeDasharray={dash} />
        ))}
      </svg>
    </div>
  );
}

/* ---------- time ---------- */

const CLOCKS = [
  { id: "ros-time", label: "ROS Time:", value: "1676978712.43", width: "w-[57px]" },
  { id: "ros-elapsed", label: "ROS Elapsed:", value: "441.75", width: "w-[72px]" },
  { id: "wall-time", label: "Wall Time:", value: "1676978712.46", width: "w-[58px]" },
  { id: "wall-elapsed", label: "Wall Elapsed:", value: "441.75", width: "w-[72px]" },
];

function TimeDock() {
  return (
    <section className="shrink-0">
      <DockHeader
        title="Time"
        icon={<svg width="13" height="13" viewBox="0 0 13 13" fill="#f4f4f4" stroke="#333" aria-hidden><circle cx="6.5" cy="6.5" r="5.3" /><path d="M6.5 3v3.5h3" strokeWidth="1.3" fill="none" /></svg>}
      />
      <div className="flex h-[30px] items-center border-b border-[#d8d6d4] pl-2">
        {CLOCKS.map((c) => (
          <div key={c.id} className="mr-[6px] flex items-center">
            <label htmlFor={c.id} className={`whitespace-nowrap ${c.width}`}>{c.label}</label>
            <input id={c.id} readOnly defaultValue={c.value} className="h-[19px] w-[108px] rounded-[3px] border border-[#b0aeab] bg-white px-[3px] text-[#222]" />
          </div>
        ))}
        <div className="mr-[11px] ml-auto flex items-center gap-[6px]">
          <Check id="experimental" />
          <label htmlFor="experimental">Experimental</label>
        </div>
      </div>
    </section>
  );
}

export default function App() {
  return (
    <div className={`flex h-screen flex-col overflow-hidden bg-[#f2f1f0] text-[11px] leading-[14px] text-[#3a3a3a] ${FONT}`}>
      <TopBar />
      <div className="flex min-h-0 flex-1">
        <Launcher />
        <main className="flex min-w-0 flex-1 flex-col">
          <Toolbar />
          <div className="flex min-h-0 flex-1">
            <DisplaysDock />
            <button type="button" aria-label="Collapse displays" className="flex w-4 shrink-0 items-center justify-end border-r border-white pr-px"><Arrow dir="left" /></button>
            <Viewport />
            <button type="button" aria-label="Collapse views" className="flex w-4 shrink-0 items-center border-l border-white pl-[2px]"><Arrow dir="closed" /></button>
            <ViewsDock />
          </div>
          <div className="h-1 shrink-0" />
          <TimeDock />
          <footer className="flex h-[22px] shrink-0 gap-[3px] pt-px pb-px pl-[2px]">
            <PushButton className="w-[37px]">Reset</PushButton>
            <span className="flex-1 border border-[#d0cecc]" />
            <output className="w-[34px] border border-[#d0cecc] pl-px whitespace-nowrap">31 fps</output>
          </footer>
        </main>
      </div>
    </div>
  );
}
